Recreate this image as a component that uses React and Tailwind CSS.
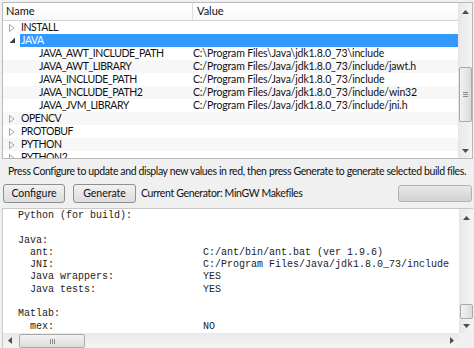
import React from "react";

const ui = { fontFamily: 'Lato, "Noto Sans", sans-serif' };
const mono = { fontFamily: '"Liberation Mono", "Courier New", monospace' };

function Collapsed() {
  return (
    <svg width="6" height="8" viewBox="0 0 6 8" className="shrink-0">
      <path d="M0.5 0.5 L5 4 L0.5 7.5 Z" fill="none" stroke="#a6a6a6" strokeWidth="1" />
    </svg>
  );
}
function Expanded() {
  return (
    <svg width="7" height="7" viewBox="0 0 7 7" className="shrink-0">
      <path d="M6 0.5 L6 6 L0.5 6 Z" fill="#404040" />
    </svg>
  );
}
function Up() {
  return (
    <svg width="7" height="4" viewBox="0 0 7 4">
      <path d="M0 4 L3.5 0 L7 4 Z" fill="#4d4d4d" />
    </svg>
  );
}
function Down() {
  return (
    <svg width="7" height="4" viewBox="0 0 7 4">
      <path d="M0 0 L3.5 4 L7 0 Z" fill="#4d4d4d" />
    </svg>
  );
}
function Left() {
  return (
    <svg width="4" height="7" viewBox="0 0 4 7">
      <path d="M4 0 L0 3.5 L4 7 Z" fill="#4d4d4d" />
    </svg>
  );
}
function Right() {
  return (
    <svg width="4" height="7" viewBox="0 0 4 7">
      <path d="M0 0 L4 3.5 L0 7 Z" fill="#4d4d4d" />
    </svg>
  );
}

const rows = [
  { name: "INSTALL", state: "c" },
  { name: "JAVA", state: "e", sel: true },
  { name: "JAVA_AWT_INCLUDE_PATH", value: "C:\\Program Files\\Java\\jdk1.8.0_73\\include", child: true },
  { name: "JAVA_AWT_LIBRARY", value: "C:/Program Files/Java/jdk1.8.0_73/include/jawt.h", child: true },
  { name: "JAVA_INCLUDE_PATH", value: "C:/Program Files/Java/jdk1.8.0_73/include", child: true },
  { name: "JAVA_INCLUDE_PATH2", value: "C:/Program Files/Java/jdk1.8.0_73/include/win32", child: true },
  { name: "JAVA_JVM_LIBRARY", value: "C:/Program Files/Java/jdk1.8.0_73/include/jni.h", child: true },
  { name: "OPENCV", state: "c" },
  { name: "PROTOBUF", state: "c" },
  { name: "PYTHON", state: "c" },
  { name: "PYTHON2", state: "c" },
];

const outLines = [
  ["  Python (for build):", ""],
  ["", ""],
  ["  Java:", ""],
  ["    ant:", "C:/ant/bin/ant.bat (ver 1.9.6)"],
  ["    JNI:", "C:/Program Files/Java/jdk1.8.0_73/include"],
  ["    Java wrappers:", "YES"],
  ["    Java tests:", "YES"],
  ["", ""],
  ["  Matlab:", ""],
  ["    mex:", "NO"],
  ["", ""],
];

export default function App() {
  return (
    <div className="w-[474px] h-[348px] bg-[#f0f0f0] overflow-hidden flex flex-col text-[#111]" style={ui}>
      {/* tree table */}
      <div className="mt-[2px] ml-[2px] w-[471px] h-[157px] border border-[#b9b9b9] bg-white flex overflow-hidden">
        <div className="flex-1 flex flex-col overflow-hidden">
          <div className="h-[18px] shrink-0 flex items-center text-[11px] border-b border-[#d5d5d5] bg-gradient-to-b from-white to-[#f7f8fa]">
            <div className="w-[190px] pl-[3px] h-full flex items-center border-r border-[#dedede]">Name</div>
            <div className="pl-[4px]">Value</div>
          </div>
          {rows.map((r, i) => (
            <div
              key={i}
              className={
                "h-[13px] shrink-0 flex items-center text-[10.5px] leading-none " +
                (i % 2 === 1 && !r.sel ? "bg-[#f7f7f7]" : "bg-white")
              }
            >
              {r.child ? (
                <>
                  <div className="w-[190px] pl-[36px] whitespace-nowrap tracking-[-0.45px]">{r.name}</div>
                  <div className="whitespace-nowrap tracking-[-0.15px]">{r.value}</div>
                </>
              ) : (
                <>
                  <span className="w-[17px] h-full pl-[6px] flex items-center shrink-0">
                    {r.state === "e" ? <Expanded /> : <Collapsed />}
                  </span>
                  <span
                    className={
                      "flex-1 h-full flex items-center pl-[1px] whitespace-nowrap tracking-[-0.45px] " +
                      (r.sel ? "bg-[#3399ff] text-white" : "")
                    }
                  >
                    {r.name}
                  </span>
                </>
              )}
            </div>
          ))}
        </div>
        {/* vertical scrollbar */}
        <div className="w-[14px] shrink-0 bg-gradient-to-r from-[#e9e9e9] to-[#f4f4f4] border-l border-[#e4e4e4] flex flex-col items-center">
          <div className="h-[17px] flex items-center justify-center"><Up /></div>
          <div className="h-[47px]"></div>
          <div className="w-[13px] h-[55px] rounded-[2px] border border-[#a9a9a9] bg-gradient-to-r from-[#f2f2f2] to-[#dcdcdc] flex flex-col items-center justify-center gap-[1px]">
            <div className="w-[5px] h-px bg-[#8a8a8a]"></div>
            <div className="w-[5px] h-px bg-[#8a8a8a]"></div>
            <div className="w-[5px] h-px bg-[#8a8a8a]"></div>
          </div>
          <div className="flex-1"></div>
          <div className="h-[14px] flex items-center justify-center"><Down /></div>
        </div>
      </div>

      {/* status */}
      <div className="h-[25px] shrink-0 flex items-center pl-[8px] text-[10.5px] tracking-[-0.38px] whitespace-nowrap">
        Press Configure to update and display new values in red, then press Generate to generate selected build files.
      </div>

      {/* buttons */}
      <div className="h-[19px] shrink-0 flex items-center text-[10.5px]">
        <div className="ml-[3px] w-[62px] h-[19px] rounded-[3px] border border-[#8e8f8f] bg-gradient-to-b from-[#f2f2f2] to-[#dcdcdc] flex items-center justify-center">Configure</div>
        <div className="ml-[8px] w-[63px] h-[19px] rounded-[3px] border border-[#8e8f8f] bg-gradient-to-b from-[#f2f2f2] to-[#dcdcdc] flex items-center justify-center">Generate</div>
        <div className="ml-[5px] whitespace-nowrap tracking-[-0.35px]">Current Generator: MinGW Makefiles</div>
        <div className="flex-1"></div>
        <div className="mr-[2px] w-[74px] h-[17px] rounded-[3px] border border-[#b2b2b2] bg-gradient-to-b from-[#e8e8e8] to-[#d2d2d2]"></div>
      </div>

      {/* output panel */}
      <div className="mt-[5px] ml-[2px] w-[471px] flex-1 border-t border-l border-[#c8c8c8] bg-white flex flex-col overflow-hidden">
        <div className="flex-1 flex overflow-hidden">
          <div className="flex-1 pt-[1px] overflow-hidden text-[10px] leading-[12.3px] text-[#222]" style={mono}>
            {outLines.map((l, i) => (
              <div key={i} className="h-[12.3px] flex whitespace-pre">
                <span className="w-[200px] pl-[3px] shrink-0">{l[0]}</span>
                <span>{l[1]}</span>
              </div>
            ))}
          </div>
          <div className="w-[14px] shrink-0 bg-gradient-to-r from-[#e9e9e9] to-[#f4f4f4] border-l border-[#e4e4e4] flex flex-col items-center">
            <div className="h-[17px] flex items-center justify-center"><Up /></div>
            <div className="flex-1"></div>
            <div className="w-[13px] h-[15px] rounded-[2px] border border-[#a9a9a9] bg-gradient-to-r from-[#f2f2f2] to-[#dcdcdc]"></div>
            <div className="h-[14px] flex items-center justify-center"><Down /></div>
          </div>
        </div>
        <div className="h-[15px] shrink-0 flex bg-gradient-to-b from-[#e9e9e9] to-[#f4f4f4]">
          <div className="w-[14px] flex items-center justify-center"><Left /></div>
          <div className="ml-[2px] w-[66px] h-[14px] mt-[1px] rounded-[2px] border border-[#a9a9a9] bg-gradient-to-b from-[#f2f2f2] to-[#dcdcdc] flex items-center justify-center gap-[1px]">
            <div className="w-px h-[5px] bg-[#8a8a8a]"></div>
            <div className="w-px h-[5px] bg-[#8a8a8a]"></div>
            <div className="w-px h-[5px] bg-[#8a8a8a]"></div>
          </div>
          <div className="flex-1"></div>
          <div className="w-[14px] flex items-center justify-center"><Right /></div>
          <div className="w-[14px] bg-[#f0f0f0]"></div>
        </div>
      </div>
    </div>
  );
}
